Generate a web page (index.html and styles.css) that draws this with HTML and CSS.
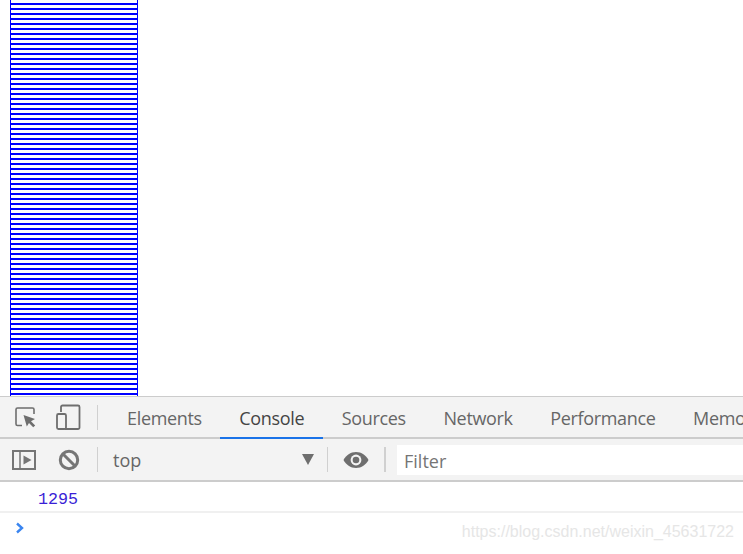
FILE: index.html
```html
<!DOCTYPE html>
<html lang="en">
<head>
    <meta charset="UTF-8">
    <title>Console</title>
    <link rel="stylesheet" href="styles.css">
</head>
<body>

    <div class="page">
        <div class="stripes"></div>
    </div>

    <div class="devtools">
        <!-- Tab Bar -->
        <div class="tabbar">
            <svg class="icon inspect" width="24" height="24" viewBox="0 0 24 24">
                <path d="M8 20.500H3.500A1.500 1.500 0 0 1 2 19V4.500A1.500 1.500 0 0 1 3.500 3h15A1.500 1.500 0 0 1 20 4.500V9" fill="none" stroke="#6e6e6e" stroke-width="1.600"/>
                <path d="M9.500 10l11.500 4-4 2.300 4.200 4.200-2 1.800-4.200-4.400-2.200 3.600z" fill="#6e6e6e"/>
            </svg>
            <svg class="icon device" width="26" height="26" viewBox="0 0 26 26">
                <path d="M6 8V3A1.500 1.500 0 0 1 7.500 1.500h15.500A1.500 1.500 0 0 1 24.500 3v20.500a1.500 1.500 0 0 1-1.500 1.500H10" fill="none" stroke="#6e6e6e" stroke-width="1.800"/>
                <rect x="2" y="10" width="9" height="15" rx="1.500" fill="none" stroke="#6e6e6e" stroke-width="1.800"/>
            </svg>
            <span class="divider"></span>
            <div class="tabs">
                <span class="tab">Elements</span>
                <span class="tab active">Console</span>
                <span class="tab">Sources</span>
                <span class="tab">Network</span>
                <span class="tab">Performance</span>
                <span class="tab">Memory</span>
            </div>
        </div>

        <!-- Console Toolbar -->
        <div class="toolbar">
            <svg class="icon sidebar" width="24" height="20" viewBox="0 0 24 20">
                <rect x="1" y="1" width="22" height="18" fill="none" stroke="#757575" stroke-width="2"/>
                <path d="M8 1v18" stroke="#757575" stroke-width="1.500"/>
                <path d="M11.500 5.500l8 4.500-8 4.500z" fill="#757575"/>
            </svg>
            <svg class="icon block" width="22" height="22" viewBox="0 0 22 22">
                <circle cx="11" cy="11" r="8.700" fill="none" stroke="#757575" stroke-width="3"/>
                <path d="M5 5l12 12" stroke="#757575" stroke-width="3"/>
            </svg>
            <span class="divider short"></span>
            <div class="context">
                <span>top</span>
                <span class="arrow"></span>
            </div>
            <span class="divider short"></span>
            <svg class="icon eye" width="26" height="18" viewBox="0 0 26 18">
                <path d="M13 1C7.500 1 3 4.400 .5 9 3 13.600 7.500 17 13 17s10-3.400 12.500-8C23 4.400 18.500 1 13 1z" fill="#6e6e6e"/>
                <circle cx="13" cy="9" r="5.400" fill="#f3f3f3"/>
                <circle cx="13" cy="9" r="3.300" fill="#6e6e6e"/>
            </svg>
            <span class="divider short thick"></span>
            <div class="filter">Filter</div>
        </div>

        <!-- Console Output -->
        <div class="output">
            <div class="log-row">1295</div>
            <div class="prompt-row">
                <svg width="10" height="12" viewBox="0 0 10 12">
                    <path d="M2 1.500L7 6l-5 4.500" fill="none" stroke="#3a85f0" stroke-width="2.400"/>
                </svg>
                <span class="watermark">https://blog.csdn.net/weixin_45631722</span>
            </div>
        </div>
    </div>

</body>
</html>
```

FILE: styles.css
```css
/* Page */
html, body {
    height: 100%;
}

body {
    margin: 0;
    background: #fff;
    font-family: "Open Sans", sans-serif;
    overflow: hidden;
    display: flex;
    flex-direction: column;
}

.page {
    height: 396px;
    padding-left: 10px;
}

/* Striped Box */
.stripes {
    width: 126px;
    height: 396px;
    border-left: 1px solid #0000ff;
    border-right: 1px solid #0000ff;
    background: repeating-linear-gradient(to bottom, #fff 0, #fff 3px, #0000ff 3px, #0000ff 5px);
}

/* Devtools */
.devtools {
    flex: 1;
    border-top: 1px solid #ccc;
    color: #5a5a5a;
}

.tabbar {
    height: 42px;
    display: flex;
    align-items: center;
    background: #f3f3f3;
    box-shadow: inset 0 -2px 0 #ccc;
    overflow: hidden;
}

.icon {
    flex-shrink: 0;
}

.tabbar .icon, .tabbar .divider {
    margin-bottom: 2px;
}

.inspect {
    margin-left: 14px;
}

.device {
    margin-left: 17px;
}

.divider {
    flex-shrink: 0;
    width: 1px;
    height: 25px;
    margin-left: 16px;
    background: #d0d0d0;
}

.tabs {
    display: flex;
    height: 42px;
    margin-left: 10px;
}

.tab {
    padding: 0 18.5px 0 19px;
    font-size: 18px;
    line-height: 43px;
    white-space: nowrap;
    color: #666;
    letter-spacing: -0.33px;
}

.tab.active {
    color: #444;
    box-shadow: inset 0 -2px 0 #1a73e8;
}

/* Toolbar */
.toolbar {
    height: 41px;
    display: flex;
    align-items: center;
    background: #f3f3f3;
    border-bottom: 2px solid #ccc;
}

.sidebar {
    margin-left: 12px;
}

.block {
    margin-left: 22px;
}

.divider.short {
    margin-left: 17px;
}

.context {
    width: 229px;
    display: flex;
    align-items: center;
    justify-content: space-between;
    padding: 0 13px 0 15px;
    box-sizing: border-box;
    font-size: 18px;
    color: #666;
}

.context + .divider.short {
    margin-left: 0;
}

.arrow {
    width: 0;
    height: 0;
    border-left: 6px solid transparent;
    border-right: 6px solid transparent;
    border-top: 11px solid #6e6e6e;
}

.eye {
    margin-left: 15px;
}

.divider.thick {
    width: 2px;
    margin-left: 15px;
}

.filter {
    flex: 1;
    height: 30px;
    margin-left: 11px;
    padding-left: 7px;
    background: #fff;
    font-size: 18px;
    line-height: 32px;
    color: #757575;
}

/* Output */
.output {
    background: #fff;
}

.log-row {
    height: 29px;
    padding-left: 38px;
    border-bottom: 2px solid #f0f0f0;
    font-family: "Liberation Mono", monospace;
    font-size: 16.7px;
    line-height: 36px;
    color: #3a1fd6;
}

.prompt-row {
    position: relative;
    height: 30px;
    padding: 9px 0 0 15px;
    box-sizing: border-box;
}

.prompt-row svg {
    display: block;
}

.watermark {
    position: absolute;
    right: 9px;
    top: 10px;
    font-family: "Liberation Sans", sans-serif;
    font-size: 16px;
    color: #e6e6e6;
}
```
